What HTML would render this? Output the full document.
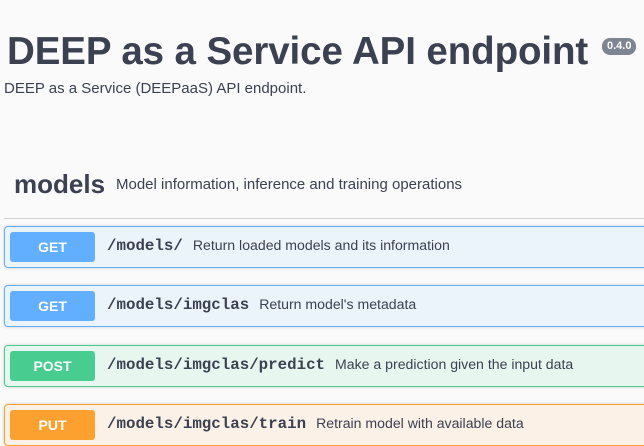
<!DOCTYPE html>
<html><head><style>
body{margin:0;background:#fafafa;width:644px;height:437px;overflow:hidden;font-family:"Liberation Sans",sans-serif;color:#3b4151;position:relative}
.t{position:absolute;left:7px;top:30px;font-size:38.5px;font-weight:bold;white-space:nowrap;letter-spacing:-0.1px}
.v{position:absolute;left:602px;top:38px;background:#7d8492;color:#fff;font-size:11px;font-weight:bold;border-radius:8px;padding:3px 5px;line-height:11px}
.s{position:absolute;left:4px;top:80px;font-size:15px}
.m{position:absolute;left:14px;top:169px;font-size:26px;font-weight:bold}
.md{position:absolute;left:116px;top:176px;font-size:15px}
.ln{position:absolute;left:4px;right:0;top:218px;height:1px;background:#d0d0d5}
.op{position:absolute;left:4px;width:660px;height:40px;border:1px solid;border-radius:4px;box-shadow:0 0 3px rgba(0,0,0,.19)}
.b{position:absolute;left:5px;top:5px;width:85px;height:30px;border-radius:3px;color:#fff;font-weight:bold;font-size:14px;text-align:center;line-height:30px}
.p{position:absolute;left:102px;top:10px;font-family:"Liberation Mono",monospace;font-weight:bold;font-size:15.8px;white-space:nowrap}
.p span{font-family:"Liberation Sans",sans-serif;font-weight:normal;font-size:14.1px;margin-left:10px}
.g{background:#ebf3fb;border-color:#61affe}.g .b{background:#61affe}
.po{background:#e8f6f0;border-color:#49cc90}.po .b{background:#49cc90}
.pu{background:#fbf1e6;border-color:#fca130}.pu .b{background:#fca130}
</style></head><body>
<div class="t">DEEP as a Service API endpoint</div>
<div class="v">0.4.0</div>
<div class="s">DEEP as a Service (DEEPaaS) API endpoint.</div>
<div class="m">models</div>
<div class="md">Model information, inference and training operations</div>
<div class="ln"></div>
<div class="op g" style="top:226px"><div class="b">GET</div><div class="p">/models/<span>Return loaded models and its information</span></div></div>
<div class="op g" style="top:285px"><div class="b">GET</div><div class="p">/models/imgclas<span>Return model's metadata</span></div></div>
<div class="op po" style="top:345px"><div class="b">POST</div><div class="p">/models/imgclas/predict<span>Make a prediction given the input data</span></div></div>
<div class="op pu" style="top:404px"><div class="b">PUT</div><div class="p">/models/imgclas/train<span>Retrain model with available data</span></div></div>
</body></html>
